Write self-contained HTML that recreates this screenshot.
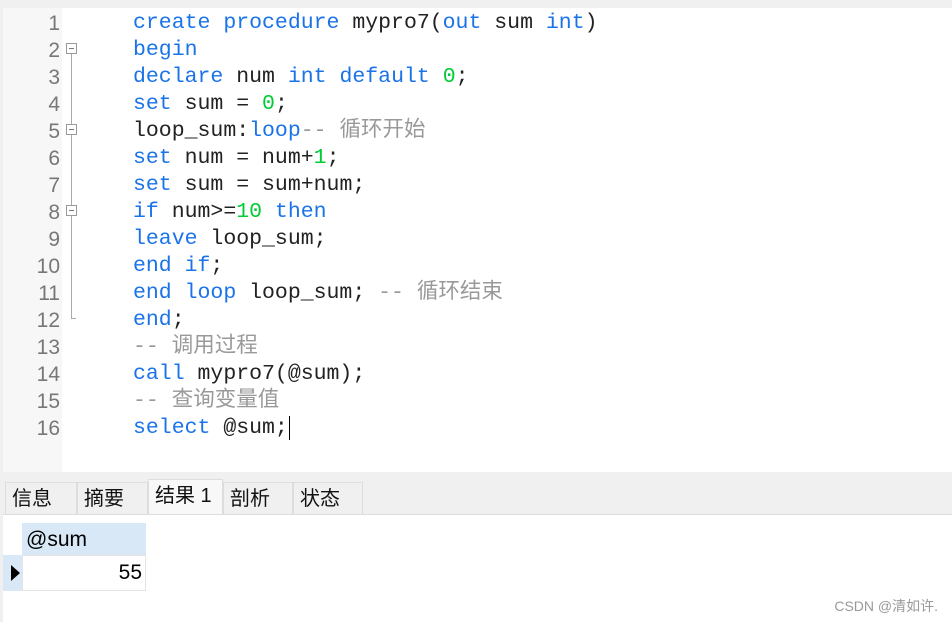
<!DOCTYPE html>
<html><head><meta charset="utf-8"><style>
body{margin:0;width:952px;height:622px;background:#f0f0f0;position:relative;overflow:hidden;font-family:"Liberation Sans","Noto Sans CJK SC",sans-serif}
#ed{position:absolute;left:3px;top:8px;width:949px;height:464px;background:#fff}
#gut{position:absolute;left:0;top:0;width:59px;height:464px;background:#f7f7f7}
.ln{position:absolute;left:0;width:57px;text-align:right;font:21px/27px "Liberation Sans",sans-serif;color:#777;height:27px}
.cd{position:absolute;left:130px;font:21.5px/27px "Liberation Mono","Noto Sans CJK SC",monospace;color:#222;white-space:pre;height:27px}
.cd span{line-height:27px}
.k{color:#1a73e8}.n{color:#0c3}.c{color:#999;font-family:"Liberation Mono","Noto Sans CJK SC",monospace}
.fb{position:absolute;left:63px;width:9px;height:9px;border:1px solid #999;background:#fff}
.fb:after{content:"";position:absolute;left:2px;top:4px;width:5px;height:1px;background:#777}
#res{position:absolute;left:3px;top:514px;width:949px;height:108px;background:#fff}
.tab{position:absolute;top:482px;height:32px;background:#f0f0f0;border:1px solid #ddd;border-bottom:none;font-size:20px;line-height:32px;padding-left:6px;box-sizing:border-box;color:#111}
</style></head><body>
<div id="ed"><div id="gut"></div>
<div style="position:absolute;left:68px;top:37px;width:1px;height:273px;background:#aaa"></div>
<div style="position:absolute;left:68px;top:310px;width:5px;height:1px;background:#aaa"></div>
<div class="fb" style="top:35px"></div><div class="fb" style="top:116px"></div><div class="fb" style="top:197px"></div>
</div>
<div id="lines"></div>
<script>
var L=[
'<span class="k">create procedure</span> mypro7(<span class="k">out</span> sum <span class="k">int</span>)',
'<span class="k">begin</span>',
'<span class="k">declare</span> num <span class="k">int</span> <span class="k">default</span> <span class="n">0</span>;',
'<span class="k">set</span> sum = <span class="n">0</span>;',
'loop_sum:<span class="k">loop</span><span class="c">-- 循环开始</span>',
'<span class="k">set</span> num = num+<span class="n">1</span>;',
'<span class="k">set</span> sum = sum+num;',
'<span class="k">if</span> num>=<span class="n">10</span> <span class="k">then</span>',
'<span class="k">leave</span> loop_sum;',
'<span class="k">end if</span>;',
'<span class="k">end loop</span> loop_sum; <span class="c">-- 循环结束</span>',
'<span class="k">end</span>;',
'<span class="c">-- 调用过程</span>',
'<span class="k">call</span> mypro7(@sum);',
'<span class="c">-- 查询变量值</span>',
'<span class="k">select</span> @sum;<span style="border-left:1px solid #000;margin-left:1px"></span>'];
var h='';for(var i=0;i<16;i++){var t=10+i*27;h+='<div class="ln" style="top:'+(t)+'px;left:3px">'+(i+1)+'</div><div class="cd" style="top:'+t+'px;left:133px">'+L[i]+'</div>';}
document.getElementById('lines').innerHTML=h;
</script>
<div id="res"></div>
<div class="tab" style="left:5px;width:72px">信息</div>
<div class="tab" style="left:77px;width:71px">摘要</div>
<div class="tab" style="left:148px;width:75px;background:#f8f8f8;top:479px;height:36px">结果 1</div>
<div class="tab" style="left:223px;width:70px">剖析</div>
<div class="tab" style="left:293px;width:70px">状态</div>
<div style="position:absolute;left:3px;top:514px;width:949px;height:1px;background:#ddd"></div>
<div style="position:absolute;left:22px;top:523px;width:124px;height:32px;background:#d9e8f6;font-size:21px;line-height:33px;padding-left:4px;box-sizing:border-box">@sum</div>
<div style="position:absolute;left:3px;top:555px;width:19px;height:36px;background:#d9e8f6"></div>
<div style="position:absolute;left:11px;top:565px;width:0;height:0;border-left:9px solid #000;border-top:8px solid transparent;border-bottom:8px solid transparent"></div>
<div style="position:absolute;left:22px;top:555px;width:124px;height:36px;border:1px solid #e4e4e4;box-sizing:border-box;font-size:21px;line-height:34px;text-align:right;padding-right:3px">55</div>
<div style="position:absolute;right:14px;top:596px;font-size:14px;color:#999">CSDN @清如许.</div>
</body></html>
